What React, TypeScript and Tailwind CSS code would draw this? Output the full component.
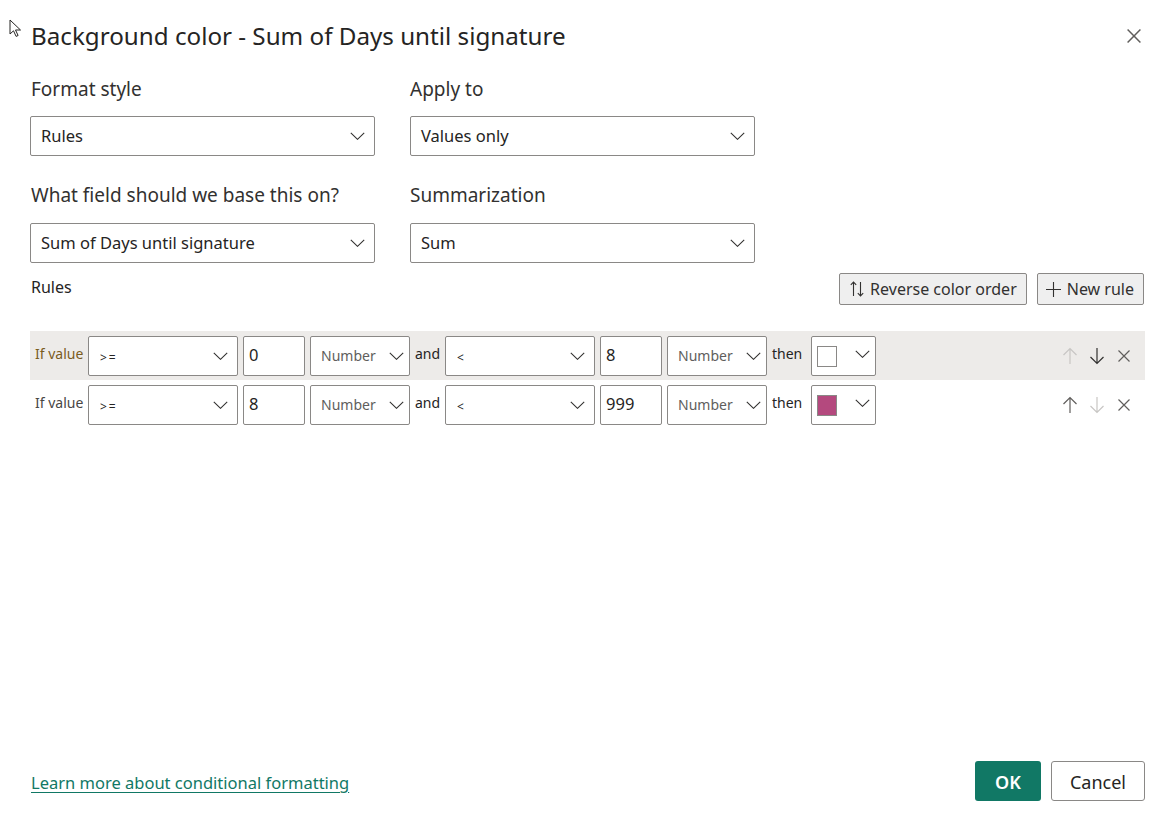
import React from "react";

const FONT = { fontFamily: '"Noto Sans", "Open Sans", Arial, sans-serif' };

function Chevron({ className = "" }: { className?: string }) {
  return (
    <svg width="15" height="8" viewBox="0 0 15 8" className={className} fill="none">
      <path d="M0.8 0.8l6.7 6.5 6.7-6.5" stroke="#323130" strokeWidth="1.1" />
    </svg>
  );
}

function BigSelect({ value }: { value: string }) {
  return (
    <div className="flex h-[40px] items-center justify-between rounded-[2px] border border-[#8a8886] bg-white pl-[10px] pr-[9px]">
      <span className="text-[16.5px] text-[#252423]">{value}</span>
      <Chevron />
    </div>
  );
}

function SmallSelect({ value, w }: { value: string; w: string }) {
  return (
    <div className={`flex h-[40px] ${w} shrink-0 items-center justify-between rounded-[2px] border border-[#8a8886] bg-white pl-[11px] pr-[9px]`}>
      <span className="mt-[5px] text-[12px] tracking-[2px] text-[#252423]">{value}</span>
      <Chevron />
    </div>
  );
}

function NumSelect() {
  return (
    <div className="flex h-[40px] w-[100px] shrink-0 items-center justify-between rounded-[2px] border border-[#8a8886] bg-white pl-[10px] pr-[5px]">
      <span className="text-[14px] text-[#605e5c]">Number</span>
      <Chevron />
    </div>
  );
}

function NumInput({ value }: { value: string }) {
  return (
    <div className="flex h-[40px] w-[62px] shrink-0 items-center rounded-[2px] border border-[#8a8886] bg-white pl-[5px]">
      <span className="text-[16.5px] text-[#252423]">{value}</span>
    </div>
  );
}

function Arrow({ dir, color }: { dir: "up" | "down"; color: string }) {
  return (
    <svg width="16" height="18" viewBox="0 0 16 18" fill="none">
      {dir === "up" ? (
        <path d="M8 17V1.5M1.5 8L8 1.5 14.5 8" stroke={color} strokeWidth="1.2" />
      ) : (
        <path d="M8 1v15.5M1.5 10L8 16.5 14.5 10" stroke={color} strokeWidth="1.2" />
      )}
    </svg>
  );
}

function XIcon({ size = 12, color = "#605e5c", w = 1.2 }: { size?: number; color?: string; w?: number }) {
  return (
    <svg width={size} height={size} viewBox="0 0 12 12" fill="none">
      <path d="M0.5 0.5l11 11M11.5 0.5l-11 11" stroke={color} strokeWidth={w} />
    </svg>
  );
}

function RuleRow({
  a,
  b,
  swatch,
  shaded,
  upColor,
  downColor,
  labelColor,
}: {
  a: string;
  b: string;
  swatch: string;
  shaded: boolean;
  upColor: string;
  downColor: string;
  labelColor: string;
}) {
  return (
    <div className={`flex h-[49px] items-center pl-[5px] pr-[15px] ${shaded ? "bg-[#edebe9]" : "bg-white"}`}>
      <span className={`mb-[5px] w-[53px] shrink-0 text-[14px] ${labelColor}`}>If value</span>
      <SmallSelect value=">=" w="w-[150px]" />
      <div className="ml-[5px]">
        <NumInput value={a} />
      </div>
      <div className="ml-[5px]">
        <NumSelect />
      </div>
      <span className="mb-[5px] ml-[5px] w-[30px] shrink-0 text-[14px] text-[#252423]">and</span>
      <SmallSelect value="<" w="w-[150px]" />
      <div className="ml-[5px]">
        <NumInput value={b} />
      </div>
      <div className="ml-[5px]">
        <NumSelect />
      </div>
      <span className="mb-[5px] ml-[5px] w-[39px] shrink-0 text-[14px] text-[#252423]">then</span>
      <div className="flex h-[40px] w-[65px] shrink-0 items-start justify-between rounded-[2px] border border-[#8a8886] bg-white pl-[5px] pr-[5px] pt-[9px]">
        <div className={`h-[21px] w-[20px] border border-[#8a8886] ${swatch}`} />
        <Chevron className="mt-[4px]" />
      </div>
      <div className="flex-1" />
      <div className="flex items-center gap-[11px]">
        <Arrow dir="up" color={upColor} />
        <Arrow dir="down" color={downColor} />
        <div className="ml-[2px]">
          <XIcon size={12} color="#605e5c" />
        </div>
      </div>
    </div>
  );
}

export default function App() {
  return (
    <div className="relative flex h-[831px] w-[1175px] flex-col bg-white text-[#252423]" style={FONT}>
      {/* mouse cursor overlay */}
      <svg className="absolute left-[9px] top-[19px]" width="14" height="20" viewBox="0 0 14 20" fill="none">
        <path d="M1 1v14l3.5-3.2 2.6 5.6 2-0.9-2.6-5.5H11.5L1 1z" fill="white" stroke="#252423" strokeWidth="1" strokeLinejoin="round" />
      </svg>

      {/* header */}
      <div className="mt-[21px] flex h-[30px] items-center justify-between pl-[31px] pr-[34px]">
        <h1 className="text-[24.2px] leading-[30px] text-[#252423]">Background color - Sum of Days until signature</h1>
        <XIcon size={14} color="#605e5c" w={1.3} />
      </div>

      <div className="px-[30px]">
        <div className="mt-[26px] grid grid-cols-[345px_345px] gap-x-[35px]">
          <div>
            <div className="h-[24px] pl-[1px] text-[19px] leading-[24px] text-[#323130]">Format style</div>
            <div className="mt-[15px]">
              <BigSelect value="Rules" />
            </div>
          </div>
          <div>
            <div className="h-[24px] text-[19px] leading-[24px] text-[#323130]">Apply to</div>
            <div className="mt-[15px]">
              <BigSelect value="Values only" />
            </div>
          </div>
          <div className="mt-[27px]">
            <div className="h-[24px] pl-[1px] text-[19px] leading-[24px] text-[#323130]">What field should we base this on?</div>
            <div className="mt-[16px]">
              <BigSelect value="Sum of Days until signature" />
            </div>
          </div>
          <div className="mt-[27px]">
            <div className="h-[24px] text-[19px] leading-[24px] text-[#323130]">Summarization</div>
            <div className="mt-[16px]">
              <BigSelect value="Sum" />
            </div>
          </div>
        </div>

        <div className="mt-[10px] flex items-start justify-between">
          <span className="mt-[3px] pl-[1px] text-[16px] leading-[22px] text-[#252423]">Rules</span>
          <div className="flex gap-[10px] pr-[1px]">
            <button className="flex h-[32px] items-center gap-[6px] rounded-[2px] border border-[#8a8886] bg-[#efefef] pl-[10px] pr-[9px] text-[16px] text-[#323130]">
              <svg width="14" height="16" viewBox="0 0 14 16" fill="none">
                <path d="M3.5 15V1M0.8 3.8L3.5 1 6.2 3.8M10.5 1v14M7.8 12.2l2.7 2.8 2.7-2.8" stroke="#323130" strokeWidth="1.1" />
              </svg>
              Reverse color order
            </button>
            <button className="flex h-[32px] items-center gap-[6px] rounded-[2px] border border-[#8a8886] bg-[#efefef] pl-[8px] pr-[9px] text-[16px] text-[#323130]">
              <svg width="15" height="15" viewBox="0 0 15 15" fill="none">
                <path d="M7.5 0v15M0 7.5h15" stroke="#323130" strokeWidth="1.1" />
              </svg>
              New rule
            </button>
          </div>
        </div>

        <div className="mt-[26px]">
          <RuleRow a="0" b="8" swatch="bg-white" shaded upColor="#c8c6c4" downColor="#323130" labelColor="text-[#7a5c1e]" />
          <RuleRow a="8" b="999" swatch="bg-[#b4497e]" shaded={false} upColor="#605e5c" downColor="#c8c6c4" labelColor="text-[#484644]" />
        </div>
      </div>

      <div className="flex-1" />

      <div className="mb-[30px] flex items-center justify-between pl-[31px] pr-[30px]">
        <a className="mt-[4px] text-[16.5px] text-[#117865] underline underline-offset-[3px] decoration-[1px]">
          Learn more about conditional formatting
        </a>
        <div className="flex gap-[10px]">
          <button className="h-[40px] w-[66px] rounded-[3px] bg-[#117865] pt-[2px] text-[18px] font-semibold text-white">OK</button>
          <button className="h-[40px] w-[94px] rounded-[3px] border border-[#8a8886] bg-white pt-[2px] text-[18px] text-[#252423]">Cancel</button>
        </div>
      </div>
    </div>
  );
}
